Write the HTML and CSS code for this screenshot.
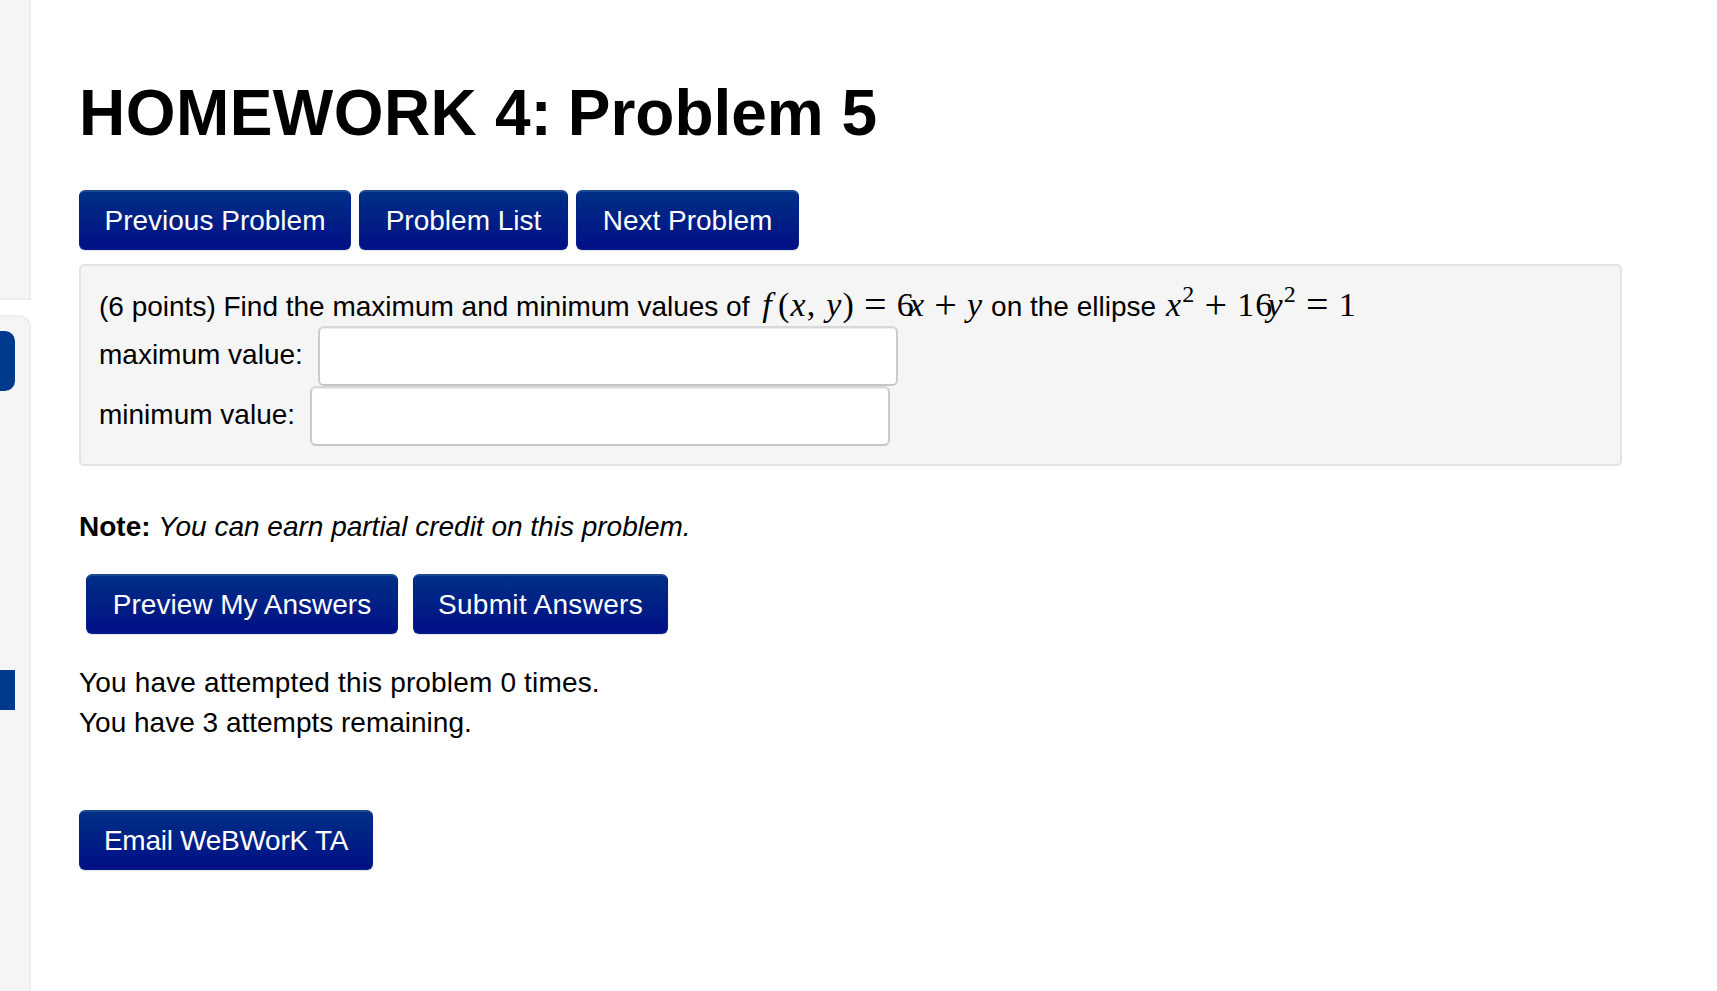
FILE: index.html
```html
<!DOCTYPE html>
<html lang="en">
<head>
<meta charset="utf-8">
<title>HOMEWORK 4: Problem 5</title>
<link rel="stylesheet" href="styles.css">
</head>
<body>
<div class="page">
  <aside class="side">
    <div class="side-top"></div>
    <div class="side-panel">
      <div class="side-pill"></div>
      <div class="side-mark"></div>
    </div>
  </aside>
  <main class="main">
    <h1 class="title"><span class="title-word">HOMEWORK</span> 4: <span class="title-rest">Problem 5</span></h1>
    <nav class="nav">
      <a class="btn btn-prev">Previous Problem</a>
      <a class="btn btn-list">Problem List</a>
      <a class="btn btn-next">Next Problem</a>
    </nav>
    <section class="problem">
      <div class="statement">(6 points) Find the maximum and minimum values of <span class="math first"><i class="fn">f</i>(<i>x</i>, <i>y</i>)<span class="op">=</span>6<i class="tight">x</i><span class="op">+</span><i>y</i></span> on the ellipse <span class="math second"><i>x</i><sup>2</sup><span class="op">+</span>16<i class="tight">y</i><sup>2</sup><span class="op">=</span>1</span></div>
      <div class="row"><label class="label">maximum value:</label><input class="field" type="text"></div>
      <div class="row"><label class="label">minimum value:</label><input class="field" type="text"></div>
    </section>
    <p class="note"><b>Note:</b> <i>You can earn partial credit on this problem.</i></p>
    <div class="actions">
      <button class="btn btn-preview">Preview My Answers</button>
      <button class="btn btn-submit">Submit Answers</button>
    </div>
    <p class="attempts">You have attempted this problem 0 times.<br>You have 3 attempts remaining.</p>
    <a class="btn btn-email">Email WeBWorK TA</a>
  </main>
</div>
</body>
</html>
```
FILE: styles.css
```css
* { box-sizing: border-box; }
html, body { margin: 0; height: 100%; background: #fff; }
body { font-family: "Liberation Sans", Arial, sans-serif; font-size: 28px; line-height: 40px; color: #000; overflow: hidden; }
.page { display: flex; height: 991px; }
.side { width: 31px; flex: none; display: flex; flex-direction: column; }
.side-top { height: 300px; background: #f5f5f5; border-right: 2px solid #eee; border-bottom: 2px solid #eee; }
.side-panel { flex: 1; margin-top: 15px; padding-top: 14px; background: #f5f5f5; border: 2px solid #eee; border-left: 0; border-bottom: 0; border-top-right-radius: 12px; }
.side-pill { width: 15px; height: 60px; background: #003a8c; border-radius: 0 10px 10px 0; }
.side-mark { width: 15px; height: 40px; margin-top: 279px; background: #003a8c; }
.main { flex: 1; padding: 0 95px 0 48px; min-width: 0; }
.title { margin: 77px 0 0; font-size: 64px; line-height: 72px; font-weight: 700; }
.title-word { letter-spacing: .45px; }
.title-rest { margin-left: -2px; }
.nav { display: flex; gap: 8px; margin-top: 41px; }
.btn { display: inline-block; height: 60px; padding: 0; text-align: center; font: 28px/58px "Liberation Sans", Arial, sans-serif; color: #fff; background: linear-gradient(#002f86, #000f85); border: 1px solid #00208a; border-top: 2px solid #1c4a8f; border-radius: 6px; box-shadow: 0 1px 1px rgba(0,0,0,.12); }
.btn-prev { width: 272px; }
.btn-list { width: 209px; }
.btn-next { width: 223px; }
.btn-preview { width: 312px; }
.btn-submit { width: 255px; letter-spacing: .3px; }
.btn-email { width: 294px; letter-spacing: -.27px; }
.problem { margin-top: 14px; height: 202px; padding: 19px 18px; background: #f5f5f5; border: 2px solid #e3e3e3; border-radius: 5px; }
.statement { height: 41px; white-space: nowrap; }
.math { font-family: "Liberation Serif", "Times New Roman", serif; font-size: 34px; letter-spacing: 1.2px; }
.math.first { margin-left: 5px; }
.math.second { margin-left: 2px; }
.math sup { font-size: 24px; line-height: 0; vertical-align: 14px; }
.op { font-size: 40px; line-height: 0; margin: 0 9px; vertical-align: -2px; }
.fn { margin-right: 5px; }
.tight { margin-left: -6px; }
.row { display: flex; align-items: center; height: 60px; }
.label { margin: 0 15px 2px 0; }
.field { width: 580px; height: 60px; background: #fff; border: 2px solid; border-color: #d8d8d8 #ccc #c6c6c6; border-radius: 6px; box-shadow: inset 0 1px 1px rgba(0,0,0,.075); }
.note { margin: 41px 0 0; }
.actions { display: flex; gap: 15px; margin: 27px 0 0 7px; }
.attempts { margin: 29px 0 0; }
.attempts::first-line { letter-spacing: .165px; }
.btn-email { margin-top: 67px; }
```
